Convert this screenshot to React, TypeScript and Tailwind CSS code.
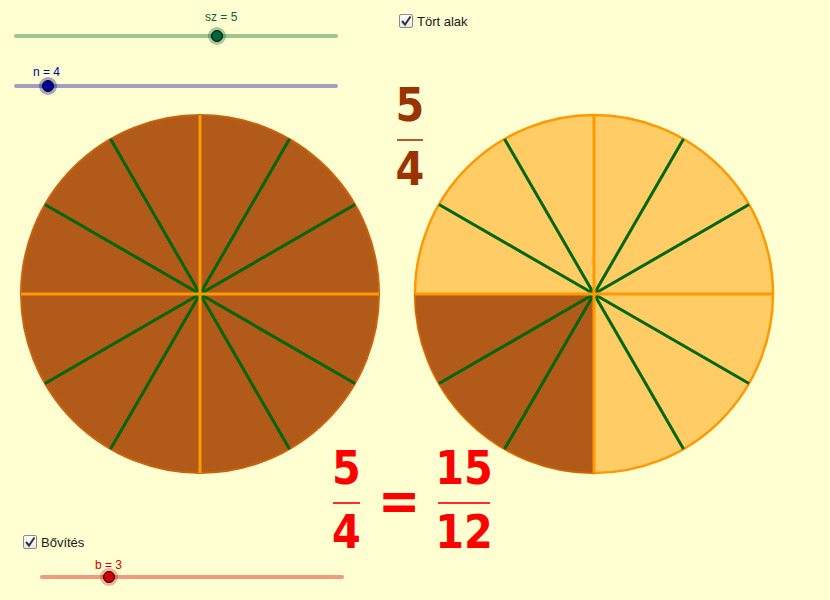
import React from "react";

const BROWN = "#b15a1a";
const LIGHT = "#ffcc66";
const ORANGE = "#ff9900";
const GREEN = "#006600";
const MATH_FONT = '"DejaVu Sans Condensed", "DejaVu Sans", sans-serif';

function Pie({ fullBrown }: { fullBrown: boolean }) {
	const c = 182;
	const r = 179;
	const lines = Array.from({ length: 12 }, (_, k) => {
		const a = (k * 30 * Math.PI) / 180;
		return { k, x: c + r * Math.cos(a), y: c + r * Math.sin(a) };
	});
	return (
		<svg width={364} height={364} viewBox="0 0 364 364">
			{fullBrown ? (
				<circle cx={c} cy={c} r={r} fill={BROWN} stroke="#c8640e" strokeWidth={2} />
			) : (
				<>
					<circle cx={c} cy={c} r={r} fill={LIGHT} stroke={ORANGE} strokeWidth={2.5} />
					<path
						d={`M ${c} ${c} L ${c - r} ${c} A ${r} ${r} 0 0 0 ${c} ${c + r} Z`}
						fill={BROWN}
						stroke="#c8640e"
						strokeWidth={1.5}
					/>
				</>
			)}
			{lines
				.filter((l) => l.k % 3 !== 0)
				.map((l) => (
					<line key={l.k} x1={c} y1={c} x2={l.x} y2={l.y} stroke={GREEN} strokeWidth={3} />
				))}
			{lines
				.filter((l) => l.k % 3 === 0)
				.map((l) => (
					<line key={l.k} x1={c} y1={c} x2={l.x} y2={l.y} stroke={ORANGE} strokeWidth={3} />
				))}
		</svg>
	);
}

function Slider({
	x1,
	x2,
	y,
	knob,
	track,
	fill,
	halo,
}: {
	x1: number;
	x2: number;
	y: number;
	knob: number;
	track: string;
	fill: string;
	halo: string;
}) {
	return (
		<>
			<div
				className="absolute h-[4px] rounded-full"
				style={{ left: x1, top: y - 2, width: x2 - x1, background: track }}
			/>
			<div
				className="absolute flex h-[18px] w-[18px] items-center justify-center rounded-full"
				style={{ left: knob - 9, top: y - 9, background: halo }}
			>
				<div className="h-[12px] w-[12px] rounded-full border border-black" style={{ background: fill }} />
			</div>
		</>
	);
}

function Checkbox({ label, left, top }: { label: string; left: number; top: number }) {
	return (
		<div className="absolute flex items-center gap-[4px]" style={{ left, top }}>
			<div className="flex h-[14px] w-[14px] items-center justify-center rounded-[2px] border border-[#8a8a8a] bg-gradient-to-b from-white to-[#e6e6e6]">
				<svg width="12" height="12" viewBox="0 0 12 12">
					<polyline points="2,6 5,9.5 10.5,1.5" fill="none" stroke="#333" strokeWidth="2" />
				</svg>
			</div>
			<span className="text-[13px] leading-none text-[#1a1a1a]">{label}</span>
		</div>
	);
}

function Fraction({
	num,
	den,
	width,
	color,
	bar,
}: {
	num: string;
	den: string;
	width: number;
	color: string;
	bar: string;
}) {
	return (
		<div className="flex flex-col items-center" style={{ width, color }}>
			<div className="text-[46px] font-bold leading-none">{num}</div>
			<div className="mt-[11px] h-[2px] w-full" style={{ background: bar }} />
			<div className="mt-[5px] text-[46px] font-bold leading-none">{den}</div>
		</div>
	);
}

export default function App() {
	return (
		<div
			className="relative h-[600px] w-[830px] overflow-hidden bg-[#ffffd1]"
			style={{ fontFamily: '"Liberation Sans", Arial, sans-serif' }}
		>
			{/* sliders */}
			<div className="absolute left-[205px] top-[11px] text-[12px] leading-none text-[#006633]">sz = 5</div>
			<Slider x1={14} x2={338} y={35.5} knob={216.5} track="#9cc68c" fill="#00663a" halo="rgba(0,102,58,0.35)" />

			<div className="absolute left-[33px] top-[66px] text-[12px] leading-none text-[#000099]">n = 4</div>
			<Slider x1={14} x2={338} y={85.5} knob={47.5} track="#9fa0c0" fill="#000099" halo="rgba(0,0,153,0.35)" />

			<Checkbox label="Tört alak" left={399} top={14} />

			{/* pies */}
			<div className="absolute left-[18px] top-[112px]">
				<Pie fullBrown />
			</div>
			<div className="absolute left-[412px] top-[112px]">
				<Pie fullBrown={false} />
			</div>

			{/* brown fraction */}
			<div className="absolute left-[397px] top-[82px]" style={{ fontFamily: MATH_FONT }}>
				<Fraction num="5" den="4" width={26} color="#993300" bar="#b8562a" />
			</div>

			{/* equation */}
			<div className="absolute left-[333px] top-[445px] flex items-center" style={{ fontFamily: MATH_FONT }}>
				<Fraction num="5" den="4" width={27} color="#ff0000" bar="#ff2a2a" />
				<div className="ml-[21px] mt-[2px] flex w-[36px] justify-center text-[56px] font-bold leading-none text-[#ff0000]">
					=
				</div>
				<div className="ml-[21px]">
					<Fraction num="15" den="12" width={52} color="#ff0000" bar="#ff2a2a" />
				</div>
			</div>

			<Checkbox label="Bővítés" left={23} top={535} />

			<div className="absolute left-[95px] top-[559px] text-[12px] leading-none text-[#cc0000]">b = 3</div>
			<Slider x1={40} x2={344} y={576.5} knob={109} track="#ee9c80" fill="#cc0000" halo="rgba(204,0,0,0.3)" />
		</div>
	);
}
